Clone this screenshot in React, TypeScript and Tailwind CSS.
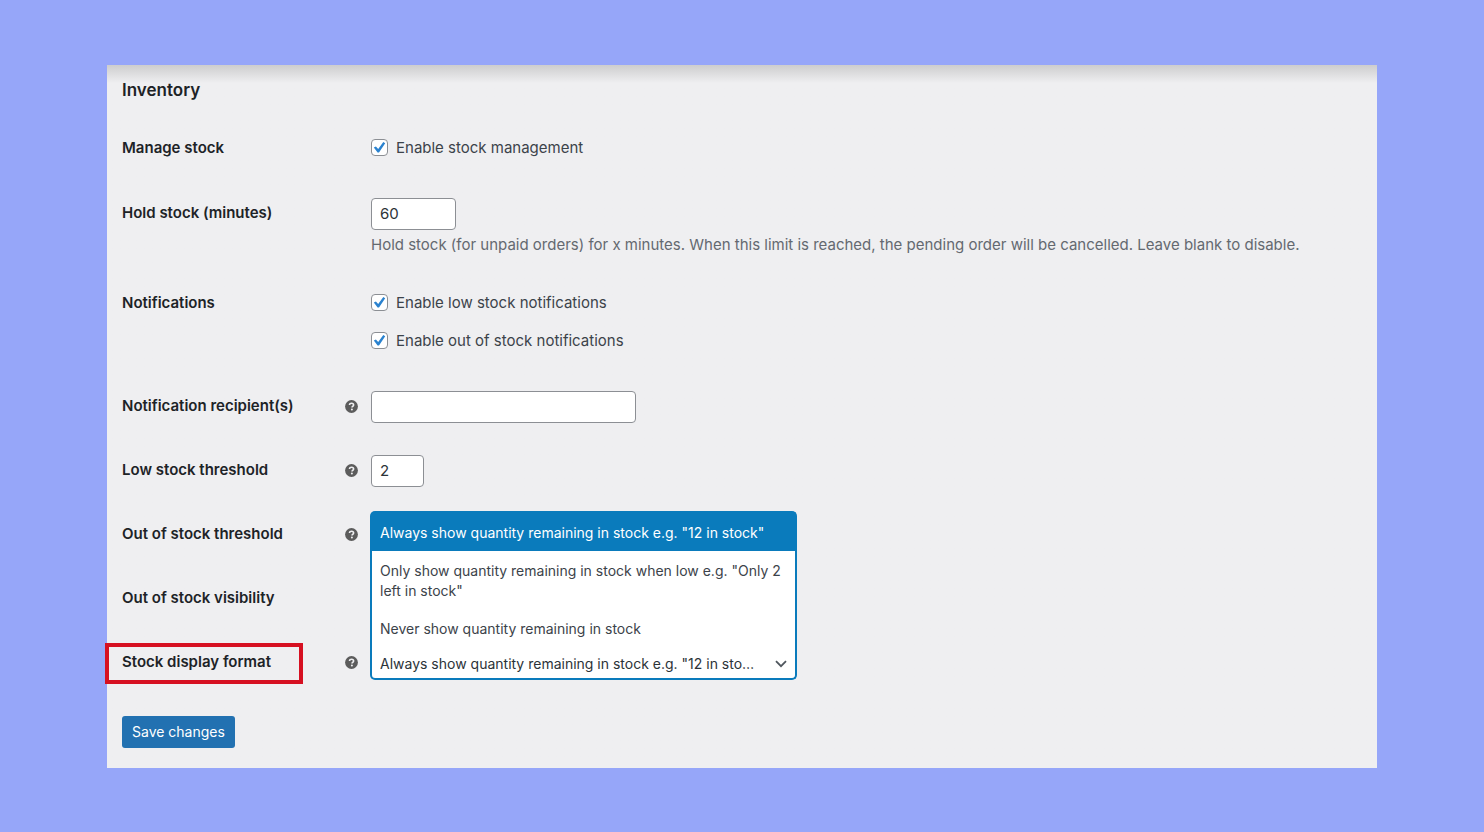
import { useState, type ReactNode } from "react"

const formats = [
  { value: "always", label: 'Always show quantity remaining in stock e.g. "12 in stock"' },
  { value: "low", label: 'Only show quantity remaining in stock when low e.g. "Only 2 left in stock"' },
  { value: "never", label: "Never show quantity remaining in stock" },
]

const inputClass =
  "block h-8 rounded-[4px] border border-[#8c8f94] bg-white px-2 pb-px text-[15px] text-[#2c3338] outline-none"

function HelpTip() {
  return (
    <svg viewBox="0 0 13 13" className="size-[13px]" aria-hidden="true">
      <circle cx="6.5" cy="6.5" r="6.4" fill="#5c5c5c" />
      <path
        d="M4.5 5.1c0-1.2.9-1.9 2.1-1.9s2 .7 2 1.7c0 1.3-1.6 1.4-1.6 2.5"
        fill="none"
        stroke="#efeff1"
        strokeWidth="1.6"
      />
      <circle cx="6.9" cy="9.4" r="1" fill="#efeff1" />
    </svg>
  )
}

type RowProps = {
  label: string
  htmlFor?: string
  help?: boolean
  highlight?: boolean
  children?: ReactNode
}

// Row whose control is a 32px tall field
function FieldRow({ label, htmlFor, help, highlight, children }: RowProps) {
  return (
    <div className="grid min-h-8 grid-cols-[223px_26px_1fr] items-start">
      <div className="relative pt-[5px]">
        <label htmlFor={htmlFor} className="block font-semibold text-[#1d2327]">
          {label}
        </label>
        {highlight && (
          <span className="pointer-events-none absolute -top-1 -left-[17px] h-[41px] w-[198px] border-4 border-[#d61021]" />
        )}
      </div>
      <div className="flex h-[31px] items-center">{help && <HelpTip />}</div>
      <div>{children}</div>
    </div>
  )
}

function Checkbox({ id, label }: { id: string; label: string }) {
  const [checked, setChecked] = useState(true)

  return (
    <div className="flex items-start gap-2">
      <span className="relative mt-px block size-[17px]">
        <input
          id={id}
          type="checkbox"
          checked={checked}
          onChange={(e) => setChecked(e.target.checked)}
          className="block size-[17px] appearance-none rounded-[4px] border border-[#8c8f94] bg-white"
        />
        {checked && (
          <svg viewBox="0 0 17 17" className="pointer-events-none absolute inset-0 size-[17px]" aria-hidden="true">
            <path d="M2.8 8.6l2.1-1.2 2.3 2.7 5.1-7 1.9 1.1L8 13.6H6.6z" fill="#2a82cf" />
          </svg>
        )}
      </span>
      <label htmlFor={id} className="text-[#3c434a]">
        {label}
      </label>
    </div>
  )
}

export default function App() {
  const [holdStock, setHoldStock] = useState("60")
  const [recipient, setRecipient] = useState("")
  const [lowStock, setLowStock] = useState("2")
  const [format, setFormat] = useState("always")

  return (
    <div className="min-h-screen bg-[#96a6f9] px-[107px] pt-[65px] pb-16 font-[Inter,sans-serif] text-[15px] leading-5">
      <form
        onSubmit={(e) => e.preventDefault()}
        className="bg-linear-to-b from-[#cdcdce] to-[#efeff1] to-[18px] px-[15px] pt-[15px] pb-5"
      >
        <h2 className="text-[17px] leading-5 font-semibold text-[#1d2327]">Inventory</h2>

        <div className="mt-[38px] grid grid-cols-[249px_1fr]">
          <span className="font-semibold text-[#1d2327]">Manage stock</span>
          <Checkbox id="manage-stock" label="Enable stock management" />
        </div>

        <div className="mt-10">
          <FieldRow label="Hold stock (minutes)" htmlFor="hold-stock">
            <input
              id="hold-stock"
              value={holdStock}
              onChange={(e) => setHoldStock(e.target.value)}
              className={`${inputClass} w-[85px]`}
            />
            <p className="mt-[5px] text-[#646970]">
              Hold stock (for unpaid orders) for x minutes. When this limit is reached, the pending order will be
              cancelled. Leave blank to disable.
            </p>
          </FieldRow>
        </div>

        <div className="mt-[38px] grid grid-cols-[249px_1fr]">
          <span className="font-semibold text-[#1d2327]">Notifications</span>
          <div className="flex flex-col gap-[18px]">
            <Checkbox id="low-stock" label="Enable low stock notifications" />
            <Checkbox id="out-of-stock" label="Enable out of stock notifications" />
          </div>
        </div>

        <div className="mt-10 flex flex-col gap-8">
          <FieldRow label="Notification recipient(s)" htmlFor="recipient" help>
            <input
              id="recipient"
              value={recipient}
              onChange={(e) => setRecipient(e.target.value)}
              className={`${inputClass} w-[265px]`}
            />
          </FieldRow>
          <FieldRow label="Low stock threshold" htmlFor="low-threshold" help>
            <input
              id="low-threshold"
              value={lowStock}
              onChange={(e) => setLowStock(e.target.value)}
              className={`${inputClass} w-[53px]`}
            />
          </FieldRow>
          <FieldRow label="Out of stock threshold" help />
          <FieldRow label="Out of stock visibility" />
          <FieldRow label="Stock display format" htmlFor="stock-format" help highlight>
            <div className="relative -ml-px w-[427px]">
              <ul
                role="listbox"
                aria-label="Stock display format"
                className="absolute inset-x-0 bottom-full rounded-t-[5px] border-2 border-b-0 border-[#0a7bbc] bg-white text-[14px]"
              >
                {formats.map((item) => (
                  <li
                    key={item.value}
                    role="option"
                    aria-selected={item.value === format}
                    onClick={() => setFormat(item.value)}
                    className={`px-2 pt-[10px] pb-2 ${item.value === format ? "bg-[#0a7bbc] text-white" : "text-[#3c434a]"}`}
                  >
                    {item.label}
                  </li>
                ))}
              </ul>
              <select
                id="stock-format"
                value={format}
                onChange={(e) => setFormat(e.target.value)}
                className="block h-[33px] w-full appearance-none truncate rounded-b-[5px] border-2 border-t-0 border-[#0a7bbc] bg-white pt-0.5 pr-9 pl-2 text-[14px] text-[#2c3338] outline-none"
              >
                {formats.map((item) => (
                  <option key={item.value} value={item.value}>
                    {item.label}
                  </option>
                ))}
              </select>
              <svg
                viewBox="0 0 12 8"
                className="pointer-events-none absolute top-[13px] right-[10px] h-2 w-3"
                aria-hidden="true"
              >
                <path d="M1 1.2l5 5 5-5" fill="none" stroke="#50575e" strokeWidth="1.8" />
              </svg>
            </div>
          </FieldRow>
        </div>

        <button type="submit" className="mt-9 h-8 rounded-[3px] bg-[#2271b1] px-[10px] text-[14px] text-white">
          Save changes
        </button>
      </form>
    </div>
  )
}
